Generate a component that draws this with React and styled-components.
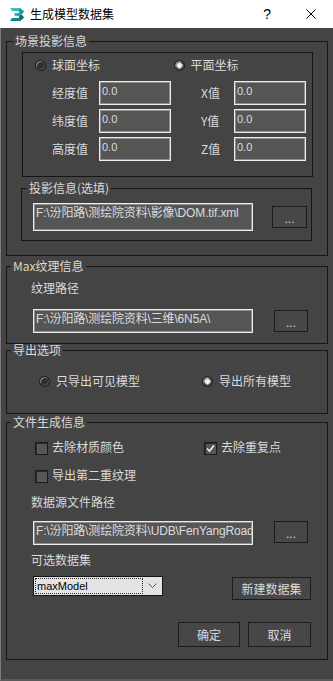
import React from "react";
import styled, { createGlobalStyle } from "styled-components";

const GlobalStyle = createGlobalStyle`
	html,
	body {
		margin: 0;
		padding: 0;
		background: #444444;
	}

	body {
		font-family: "Noto Sans CJK SC", "Noto Sans", sans-serif;
	}
`;

const Window = styled.div`
	width: 333px;
	height: 681px;
	display: flex;
	flex-direction: column;
	overflow: hidden;
	background: #444444;
`;

const TitleBar = styled.header`
	height: 28px;
	flex: none;
	display: flex;
	align-items: center;
	background: #ffffff;
	padding: 0 17px 0 9px;

	.title {
		margin-left: 5px;
		font-size: 12px;
		line-height: 16px;
		color: #000000;
	}

	.help {
		margin-left: auto;
		font-family: "Liberation Sans", sans-serif;
		font-size: 14px;
		color: #000000;
		margin-top: -1px;
	}

	.close {
		margin-left: 35px;
		display: block;
	}
`;

const Body = styled.main`
	flex: 1;
	display: flex;
	flex-direction: column;
	padding: 6px 5px 0 5px;
	border-left: 1px solid #7c7c7c;
	border-bottom: 2px solid #5a5a5a;
`;

const Group = styled.fieldset`
	margin: ${(props) => props.$top || 0}px ${(props) => props.$right || 0}px 0 ${(props) => props.$left || 0}px;
	padding: 0;
	border: 1px solid #151515;
	min-width: 0;
`;

const Legend = styled.legend`
	margin-left: ${(props) => props.$indent}px;
	padding: 0 2px;
	font-size: 12px;
	line-height: 14px;
	color: #dadada;

	.max {
		color: #e2d4a8;
	}
`;

const GroupBody = styled.div`
	padding: ${(props) => props.$pad};
	display: flex;
	flex-direction: column;
`;

const CoordBox = styled.div`
	border: 1px solid #151515;
	padding: 4px 0 15px 12px;
`;

const RadioRow = styled.div`
	display: flex;
	height: 16px;
	align-items: center;
`;

const RadioOption = styled.label`
	width: ${(props) => props.$w}px;
	display: flex;
	align-items: center;
	gap: 6px;
	font-size: 12px;
	line-height: 16px;
	color: #dadada;
	white-space: nowrap;
`;

const RadioDot = styled.span`
	width: 11px;
	height: 11px;
	box-sizing: border-box;
	border-radius: 50%;
	border: 1px solid #1a1a1a;
	background: ${(props) =>
		props.$checked
			? "radial-gradient(circle, #f2f2f2 0 2px, #a8a8a8 2.6px 3px, #333 3.6px)"
			: "#2f2f2f"};
	box-shadow: inset 1px 1px 0 #8c8c8c, inset -1px -1px 0 #555;
	flex: none;
`;

const FieldGrid = styled.div`
	margin-top: 8px;
	padding-left: 17px;
	display: grid;
	grid-template-columns: 47px 72px 30px 33px 72px;
	grid-auto-rows: 24px;
	row-gap: 4px;
	align-items: center;
`;

const Label = styled.div`
	font-size: 12px;
	line-height: 16px;
	color: #dadada;
	white-space: nowrap;
	margin-left: ${(props) => props.$left || 0}px;
	margin-top: ${(props) => props.$top || 0}px;
`;

const TextBox = styled.div`
	box-sizing: border-box;
	width: ${(props) => props.$w}px;
	height: ${(props) => props.$h}px;
	border: 1px solid #ececec;
	box-shadow: inset 0 0 0 1px #8e8e8e;
	background: #555555;
	color: #dcdcdc;
	font-family: "Liberation Sans", "Noto Sans CJK SC", sans-serif;
	font-size: ${(props) => props.$size || 12}px;
	letter-spacing: ${(props) => (props.$size ? 0 : -0.15)}px;
	line-height: 16px;
	padding: 1px 2px;
	white-space: nowrap;
	overflow: hidden;
`;

const PathRow = styled.div`
	display: flex;
	align-items: center;
	margin-top: ${(props) => props.$top || 0}px;
	padding-left: ${(props) => props.$left || 0}px;
	padding-right: ${(props) => props.$right || 0}px;
`;

const Button = styled.button`
	box-sizing: border-box;
	width: ${(props) => props.$w}px;
	height: ${(props) => props.$h}px;
	margin-left: ${(props) => (props.$push ? "auto" : "0")};
	margin-top: ${(props) => props.$top || 0}px;
	padding: 0;
	background: #474747;
	border: 1px solid #1c1c1c;
	color: #dadada;
	font-family: "Noto Sans CJK SC", sans-serif;
	font-size: 12px;
	line-height: 14px;
	flex: none;

	&.dots {
		font-family: "Liberation Sans", sans-serif;
		padding-top: 3px;
	}
`;

const CheckRow = styled.div`
	display: flex;
	align-items: center;
	height: 16px;
	margin-left: 4px;
	margin-top: ${(props) => props.$top || 0}px;
`;

const CheckOption = styled.label`
	width: ${(props) => props.$w}px;
	display: flex;
	align-items: center;
	gap: 4px;
	font-size: 12px;
	line-height: 16px;
	color: #dadada;
	white-space: nowrap;

	.box {
		width: 13px;
		height: 13px;
		box-sizing: border-box;
		border: 1px solid #1a1a1a;
		background: #575757;
		box-shadow: inset 1px 1px 0 #2c2c2c;
		flex: none;
		display: flex;
		align-items: center;
		justify-content: center;
		margin-top: 3px;
	}
`;

const ComboRow = styled.div`
	display: flex;
	align-items: flex-start;
	margin-top: 8px;
	padding-left: 2px;
`;

const Combo = styled.div`
	box-sizing: border-box;
	width: 130px;
	height: 20px;
	border: 1px solid #151515;
	background: #e4e4e4;
	display: flex;
	padding: 1px;

	.value {
		flex: 1;
		border: 1px dotted #2a2a2a;
		font-family: "Liberation Sans", sans-serif;
		font-size: 11px;
		line-height: 14px;
		color: #000000;
		padding-left: 1px;
	}

	.arrow {
		width: 18px;
		display: flex;
		align-items: center;
		justify-content: center;
	}
`;

const Footer = styled.div`
	display: flex;
	justify-content: flex-end;
	gap: 8px;
	margin-top: 22px;
`;

const MaxIcon = () => (
	<svg width="16" height="15" viewBox="0 0 16 15">
		<defs>
			<linearGradient id="mx" x1="0" y1="0" x2="0" y2="1">
				<stop offset="0" stopColor="#3cc6c4" />
				<stop offset="1" stopColor="#0c7f86" />
			</linearGradient>
		</defs>
		<path d="M1 1 H11 L15 4.5 L12.5 7.5 L15 10.5 L11 14 H1 L3 11 H9.5 L10.5 10 L9 8.8 H5.5 V6.2 H9 L10.5 5 L9.5 4 H3 Z" fill="url(#mx)" />
		<path d="M11 1 L15 4.5 L12.5 7.5 L10.5 5 L9.5 4 Z" fill="#1a9ea3" />
		<path d="M12.5 7.5 L15 10.5 L11 14 L10.5 10 Z" fill="#0a6a70" />
	</svg>
);

const CloseIcon = () => (
	<svg className="close" width="10" height="10" viewBox="0 0 10 10">
		<path d="M0.5 0.5 L9.5 9.5 M9.5 0.5 L0.5 9.5" stroke="#000" strokeWidth="1" />
	</svg>
);

const Radio = ({ w, checked, children }) => (
	<RadioOption $w={w}>
		<RadioDot $checked={checked} />
		{children}
	</RadioOption>
);

const Check = ({ w, checked, children }) => (
	<CheckOption $w={w}>
		<span className="box">
			{checked && (
				<svg width="9" height="9" viewBox="0 0 9 9">
					<path d="M1 4.5 L3.5 7 L8 1.5" stroke="#f0f0f0" strokeWidth="1.6" fill="none" />
				</svg>
			)}
		</span>
		{children}
	</CheckOption>
);

const coords = [
	["经度值", "X值"],
	["纬度值", "Y值"],
	["高度值", "Z值"],
];

export default function App() {
	return (
		<Window>
			<GlobalStyle />
			<TitleBar>
				<MaxIcon />
				<span className="title">生成模型数据集</span>
				<span className="help">?</span>
				<CloseIcon />
			</TitleBar>
			<Body>
				<Group>
					<Legend $indent={6}>场景投影信息</Legend>
					<GroupBody $pad="4px 14px 14px 15px">
						<CoordBox>
							<RadioRow>
								<Radio w={150}>球面坐标</Radio>
								<Radio w={150} checked>
									平面坐标
								</Radio>
							</RadioRow>
							<FieldGrid>
								{coords.map(([a, b]) => (
									<React.Fragment key={a}>
										<Label>{a}</Label>
										<TextBox $w={72} $h={24} $size={11}>
											0.0
										</TextBox>
										<span />
										<Label>{b}</Label>
										<TextBox $w={72} $h={24} $size={11}>
											0.0
										</TextBox>
									</React.Fragment>
								))}
							</FieldGrid>
						</CoordBox>
						<Group $top={4} $left={-1} $right={1}>
							<Legend $indent={5}>投影信息(选填)</Legend>
							<GroupBody $pad="8px 4px 9px 11px">
								<PathRow>
									<TextBox $w={220} $h={28}>
										F:\汾阳路\测绘院资料\影像\DOM.tif.xml
									</TextBox>
									<Button className="dots" $w={35} $h={22} $push>
										...
									</Button>
								</PathRow>
							</GroupBody>
						</Group>
					</GroupBody>
				</Group>

				<Group $top={3}>
					<Legend $indent={4}>
						<span className="max">Max</span>纹理信息
					</Legend>
					<GroupBody $pad="7px 19px 10px 24px">
						<Label>纹理路径</Label>
						<PathRow $top={13} $left={2}>
							<TextBox $w={220} $h={24}>
								F:\汾阳路\测绘院资料\三维\6N5A\
							</TextBox>
							<Button className="dots" $w={34} $h={22} $push>
								...
							</Button>
						</PathRow>
					</GroupBody>
				</Group>

				<Group $top={-1}>
					<Legend $indent={4}>导出选项</Legend>
					<GroupBody $pad="16px 0 24px 32px">
						<RadioRow>
							<Radio w={163}>只导出可见模型</Radio>
							<Radio w={120} checked>
								导出所有模型
							</Radio>
						</RadioRow>
					</GroupBody>
				</Group>

				<Group $top={1}>
					<Legend $indent={4}>文件生成信息</Legend>
					<GroupBody $pad="10px 16px 12px 24px">
						<CheckRow>
							<Check w={169}>去除材质颜色</Check>
							<Check w={100} checked>
								去除重复点
							</Check>
						</CheckRow>
						<CheckRow $top={12}>
							<Check w={169}>导出第二重纹理</Check>
						</CheckRow>
						<Label $top={11}>数据源文件路径</Label>
						<PathRow $top={11} $left={2} $right={3}>
							<TextBox $w={220} $h={24}>
								F:\汾阳路\测绘院资料\UDB\FenYangRoad.udb
							</TextBox>
							<Button className="dots" $w={34} $h={22} $push $top={-2}>
								...
							</Button>
						</PathRow>
						<Label $top={7}>可选数据集</Label>
						<ComboRow>
							<Combo>
								<div className="value">maxModel</div>
								<div className="arrow">
									<svg width="9" height="6" viewBox="0 0 9 6">
										<path d="M0.5 0.5 L4.5 4.5 L8.5 0.5" stroke="#555" fill="none" />
									</svg>
								</div>
							</Combo>
							<Button $w={79} $h={23} $push $top={1}>
								新建数据集
							</Button>
						</ComboRow>
						<Footer>
							<Button $w={62} $h={25}>
								确定
							</Button>
							<Button $w={63} $h={25}>
								取消
							</Button>
						</Footer>
					</GroupBody>
				</Group>
			</Body>
		</Window>
	);
}
